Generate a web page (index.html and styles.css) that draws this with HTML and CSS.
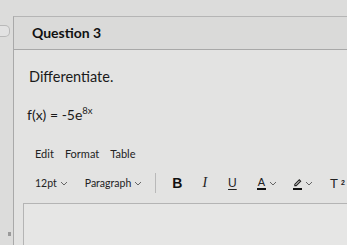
FILE: index.html
```html
<!DOCTYPE html>
<html>
<head>
<meta charset="utf-8">
<link rel="stylesheet" href="styles.css">
</head>
<body>
<div class="page">
  <div class="gutter">
    <div class="flag"></div>
    <div class="tick"></div>
  </div>
  <div class="card">
    <div class="card-head">Question 3</div>
    <div class="card-body">
      <p class="prompt">Differentiate.</p>
      <p class="formula">f(x) = -5e<sup>8x</sup></p>
      <div class="menubar">
        <span>Edit</span><span>Format</span><span>Table</span>
      </div>
      <div class="toolbar">
        <span class="drop">12pt <svg class="chev" viewBox="0 0 8 5"><path d="M1 1l3 3 3-3"/></svg></span>
        <span class="drop para">Paragraph <svg class="chev" viewBox="0 0 8 5"><path d="M1 1l3 3 3-3"/></svg></span>
        <span class="sep"></span>
        <span class="btn bold">B</span>
        <span class="btn ital">I</span>
        <span class="btn und">U</span>
        <span class="btn color"><span class="a">A</span><svg class="chev" viewBox="0 0 8 5"><path d="M1 1l3 3 3-3"/></svg></span>
        <span class="btn hl"><svg class="pen" viewBox="0 0 10 10"><path d="M2 7l5-5 1.5 1.5-5 5H2z"/></svg><svg class="chev" viewBox="0 0 8 5"><path d="M1 1l3 3 3-3"/></svg></span>
        <span class="btn sup">T<sup>2</sup></span>
      </div>
      <div class="editor"></div>
    </div>
  </div>
</div>
</body>
</html>
```
FILE: styles.css
```css
html, body {
  margin: 0;
  padding: 0;
  background: #dcdcdb;
  font-family: Lato, "Noto Sans", sans-serif;
  color: #1a1a1a;
  overflow: hidden;
}
.page {
  display: flex;
  width: 347px;
  height: 245px;
  padding-top: 16px;
  box-sizing: border-box;
  overflow: hidden;
}
.gutter {
  width: 13px;
  display: flex;
  flex-direction: column;
}
.flag {
  margin-top: 9px;
  width: 9px;
  height: 10px;
  border: 1px solid #b9b9b9;
  border-left: none;
  border-radius: 0 5px 5px 0;
  background: #e2e2e2;
}
.tick {
  margin-top: 195px;
  margin-left: 8px;
  width: 3px;
  height: 4px;
  background: #9a9a9a;
}
.card {
  flex: 1;
  border-left: 1px solid #a9a9a9;
  border-top: 1px solid #b5b5b5;
  display: flex;
  flex-direction: column;
}
.card-head {
  height: 32px;
  flex: none;
  background: #dadad9;
  border-bottom: 1px solid #a8a8a8;
  font-weight: 700;
  font-size: 14px;
  line-height: 31px;
  padding-left: 18px;
  color: #111;
}
.card-body {
  flex: 1;
  background: #e3e3e2;
  padding-left: 14px;
}
.prompt {
  margin: 17px 0 0 1px;
  font-size: 14.5px;
  line-height: 20px;
}
.formula {
  margin: 19px 0 0 -1px;
  font-size: 14px;
  line-height: 18px;
}
.formula sup {
  font-size: 9.5px;
  vertical-align: 6px;
  line-height: 0;
}
.menubar {
  margin: 23px 0 0 7px;
  display: flex;
  gap: 11px;
  font-size: 11px;
  line-height: 14px;
  color: #222;
}
.toolbar {
  margin: 11px 0 0 7px;
  display: flex;
  align-items: center;
  height: 22px;
  font-size: 10.5px;
  color: #222;
}
.drop {
  display: flex;
  align-items: center;
  gap: 3px;
}
.para { margin-left: 17px; }
.chev {
  width: 8px;
  height: 5px;
  fill: none;
  stroke: #666;
  stroke-width: 1;
}
.sep {
  width: 1px;
  height: 20px;
  background: #b9b9b9;
  margin-left: 13px;
}
.btn {
  display: flex;
  align-items: center;
  gap: 3px;
}
.bold {
  margin-left: 16px;
  font-family: "Liberation Sans", sans-serif;
  font-weight: 700;
  font-size: 14px;
  color: #111;
}
.ital {
  margin-left: 20px;
  font-family: "Liberation Serif", serif;
  font-style: italic;
  font-size: 14px;
  color: #222;
}
.und {
  margin-left: 21px;
  font-family: "Liberation Sans", sans-serif;
  font-size: 12px;
  text-decoration: underline;
  text-underline-offset: 2px;
  color: #222;
}
.color {
  margin-left: 20px;
}
.color .a {
  font-family: "Liberation Sans", sans-serif;
  font-size: 11px;
  line-height: 11px;
  border-bottom: 2px solid #111;
  padding: 0 1px;
  color: #222;
}
.hl {
  margin-left: 16px;
}
.pen {
  width: 9px;
  height: 11px;
  fill: none;
  stroke: #222;
  stroke-width: 1.2;
  border-bottom: 2px solid #111;
}
.sup {
  margin-left: 17px;
  font-family: "Liberation Sans", sans-serif;
  font-size: 13px;
  color: #222;
}
.sup sup {
  font-size: 7px;
  font-weight: 700;
  line-height: 0;
}
.editor {
  margin: 9px 0 0 -5px;
  height: 50px;
  border-top: 1px solid #b4b4b4;
  border-left: 1px solid #b4b4b4;
  background: #e6e6e5;
}
```
